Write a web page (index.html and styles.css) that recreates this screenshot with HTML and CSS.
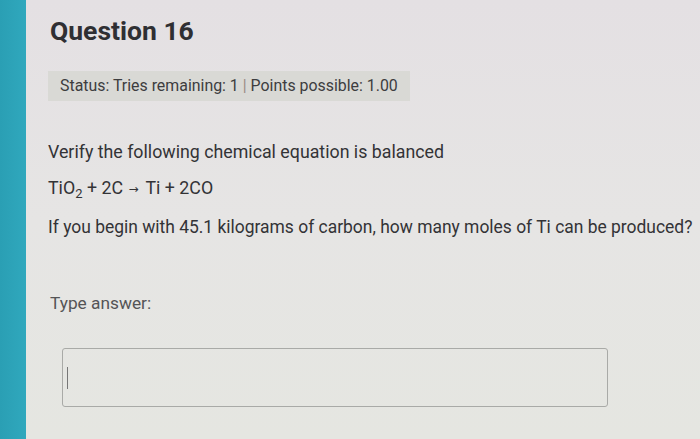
FILE: index.html
```html
<!DOCTYPE html>
<html>
<head>
<meta charset="utf-8">
<link rel="stylesheet" href="styles.css">
</head>
<body>
<div class="page">
  <div class="side"></div>
  <main class="content">
    <h1 class="title">Question 16</h1>
    <div class="status">Status: Tries remaining: 1 <span class="sep">|</span> Points possible: 1.00</div>
    <p class="q q1">Verify the following chemical equation is balanced</p>
    <p class="q eq">TiO<sub>2</sub> + 2C <span class="arrow">→</span> Ti + 2CO</p>
    <p class="q q2">If you begin with 45.1 kilograms of carbon, how many moles of Ti can be produced?</p>
    <p class="label">Type answer:</p>
    <div class="answer"><span class="caret"></span></div>
  </main>
</div>
</body>
</html>
```
FILE: styles.css
```css
html, body { margin: 0; padding: 0; }
body {
  width: 700px; height: 439px; overflow: hidden;
  font-family: Roboto, "Liberation Sans", sans-serif;
  background: linear-gradient(180deg, #e4e0e3 0%, #e6e5e4 50%, #e5e6e1 100%);
}
.page { display: flex; height: 439px; }
.side { width: 26px; flex: none; background: linear-gradient(90deg, #2a9fb4, #30a8bd); }
.content { flex: 1; padding-left: 22px; white-space: nowrap; overflow: hidden; }
.title {
  margin: 16px 0 0 2px; font-size: 26.5px; font-weight: 700; color: #2f2f33; line-height: 30px;
}
.status {
  display: inline-block; margin-top: 25px; padding: 0 12px; height: 30px; line-height: 30px;
  background: #d9d9d5; color: #3d3d3f; font-size: 15.9px;
}
.sep { color: #9a8a84; }
.q { margin: 0; font-size: 17.8px; color: #333336; line-height: 20px; }
.q1 { margin-top: 41px; }
.eq { margin-top: 16px; }
.eq sub { font-size: 13px; vertical-align: -4px; line-height: 0; }
.arrow { font-family: "DejaVu Sans", sans-serif; font-size: 12px; vertical-align: 1px; margin: 0 3px 0 1px; }
.q2 { margin-top: 18px; font-size: 17.45px; }
.label { margin: 56px 0 0 2px; font-size: 17.3px; color: #545456; line-height: 20px; }
.answer {
  margin: 35px 0 0 14px; width: 540px; height: 57px; border: 1px solid #a9aaa7; border-radius: 3px;
  display: flex; align-items: center; padding-left: 4px;
}
.caret { width: 1px; height: 22px; background: #777; }
```
